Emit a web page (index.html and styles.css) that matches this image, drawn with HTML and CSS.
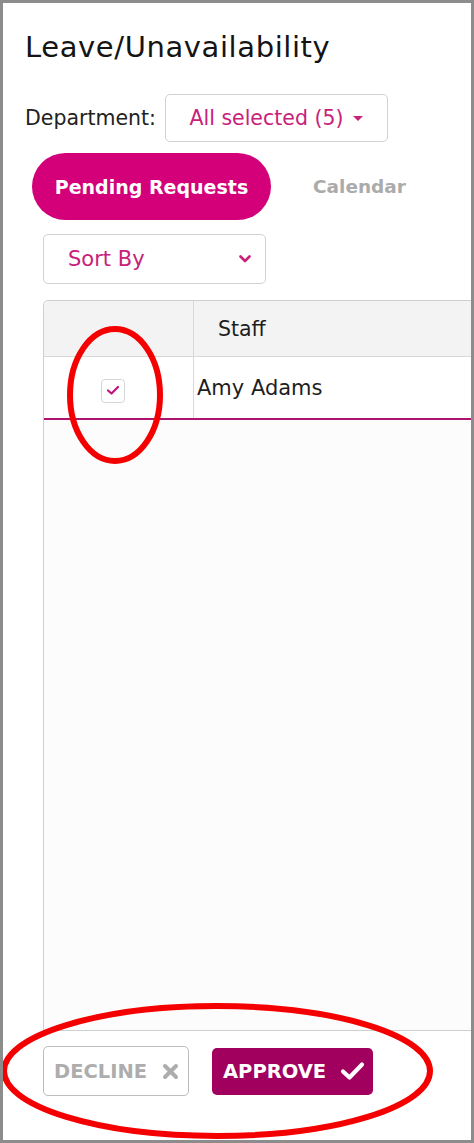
FILE: index.html
```html
<!DOCTYPE html>
<html>
<head>
<meta charset="utf-8">
<link rel="stylesheet" href="styles.css">
</head>
<body>
<div class="frame">
  <h1 class="title">Leave/Unavailability</h1>
  <div class="dept-row">
    <span class="dept-label">Department:</span>
    <div class="dept-select">All selected (5) <span class="caret"></span></div>
  </div>
  <div class="tabs">
    <div class="tab active">Pending Requests</div>
    <div class="tab">Calendar</div>
  </div>
  <div class="sort-select">
    <span>Sort By</span>
    <svg class="chev" width="12" height="8" viewBox="0 0 12 8"><path d="M1.5 1.5 L6 6 L10.5 1.5" fill="none" stroke="#c8217a" stroke-width="2.6" stroke-linecap="round" stroke-linejoin="round"/></svg>
  </div>
  <div class="table">
    <div class="thead">
      <div class="cell-check"></div>
      <div class="cell-name head">Staff</div>
    </div>
    <div class="row">
      <div class="cell-check">
        <div class="checkbox">
          <svg width="14" height="11" viewBox="0 0 14 11"><path d="M2 5.5 L5.5 8.5 L12 2" fill="none" stroke="#c0127a" stroke-width="2.2" stroke-linecap="round" stroke-linejoin="round"/></svg>
        </div>
      </div>
      <div class="cell-name">Amy Adams</div>
    </div>
    <div class="tbody-empty"></div>
  </div>
  <div class="actions">
    <button class="btn decline">DECLINE
      <svg width="17" height="17" viewBox="0 0 17 17"><path d="M3 3 L14 14 M14 3 L3 14" stroke="#adadad" stroke-width="4" stroke-linecap="round"/></svg>
    </button>
    <button class="btn approve">APPROVE
      <svg width="25" height="20" viewBox="0 0 25 20"><path d="M3 10.5 L9.5 16.5 L22 3.5" fill="none" stroke="#fff" stroke-width="4.2" stroke-linecap="round" stroke-linejoin="round"/></svg>
    </button>
  </div>
  <svg class="annotations" width="474" height="1143" viewBox="0 0 474 1143">
    <ellipse cx="115" cy="395" rx="45" ry="66" fill="none" stroke="#f50000" stroke-width="6"/>
    <ellipse cx="217" cy="1071" rx="213" ry="65" fill="none" stroke="#f50000" stroke-width="6"/>
  </svg>
</div>
</body>
</html>
```
FILE: styles.css
```css
* { box-sizing: border-box; }
html, body { margin: 0; padding: 0; background: #fff; }
body { font-family: "DejaVu Sans", "Open Sans", sans-serif; color: #1b1b1b; }

.frame {
  position: relative;
  width: 474px;
  height: 1143px;
  border: 3px solid #8c8c8c;
  overflow: hidden;
  display: flex;
  flex-direction: column;
  padding-left: 22px;
}

.title {
  margin: 26px 0 0 0;
  font-size: 29px;
  font-weight: 500;
  line-height: 36px;
  letter-spacing: 0.6px;
  color: #141414;
}

.dept-row {
  display: flex;
  align-items: center;
  gap: 9px;
  margin-top: 29px;
  height: 48px;
}
.dept-label { font-size: 20.5px; color: #222; }
.dept-select {
  height: 48px;
  width: 223px;
  border: 1px solid #d2d2d2;
  border-radius: 5px;
  display: flex;
  align-items: center;
  justify-content: center;
  gap: 10px;
  font-size: 20.5px;
  color: #c8217a;
}
.caret {
  width: 0; height: 0;
  border-left: 5px solid transparent;
  border-right: 5px solid transparent;
  border-top: 5px solid #c8217a;
}

.tabs {
  display: flex;
  align-items: center;
  margin-top: 11px;
  margin-left: 7px;
  gap: 42px;
}
.tab {
  font-size: 18.5px;
  font-weight: 700;
  color: #ababab;
}
.tab.active {
  height: 67px;
  width: 239px;
  border-radius: 34px;
  background: #d3007a;
  color: #fff;
  font-size: 19px;
  display: flex;
  align-items: center;
  justify-content: center;
}

.sort-select {
  margin-top: 14px;
  margin-left: 18px;
  width: 223px;
  height: 50px;
  border: 1px solid #d2d2d2;
  border-radius: 5px;
  display: flex;
  align-items: center;
  justify-content: space-between;
  padding: 0 14px 0 24px;
  font-size: 21px;
  color: #c8217a;
}

.table {
  margin-top: 16px;
  margin-left: 18px;
  width: 460px;
  height: 731px;
  border: 1px solid #cfcfcf;
  border-radius: 5px 0 0 0;
  display: flex;
  flex-direction: column;
  background: #fcfcfc;
}
.thead {
  display: flex;
  height: 56px;
  background: #f3f3f3;
  border-bottom: 1px solid #d8d8d8;
  border-radius: 5px 0 0 0;
}
.row {
  display: flex;
  height: 63px;
  background: #fff;
  border-bottom: 2px solid #b0136e;
}
.cell-check {
  width: 150px;
  flex: none;
  border-right: 1px solid #d8d8d8;
  display: flex;
  align-items: center;
  justify-content: center;
}
.cell-name {
  display: flex;
  align-items: center;
  padding-left: 3px;
  font-size: 21px;
  color: #1e1e1e;
}
.cell-name.head { padding-left: 24px; font-size: 20.5px; }
.checkbox {
  width: 24px;
  height: 24px;
  border: 1px solid #d6d6d6;
  border-radius: 4px;
  background: #fff;
  display: flex;
  align-items: center;
  justify-content: center;
  margin-top: 6px;
  margin-right: 12px;
}
.tbody-empty { flex: 1; }

.actions {
  display: flex;
  align-items: center;
  gap: 23px;
  margin-top: 15px;
  margin-left: 18px;
}
.btn {
  font-family: inherit;
  font-weight: 700;
  font-size: 19.5px;
  border-radius: 5px;
  display: flex;
  align-items: center;
  gap: 14px;
  padding: 0;
}
.btn.decline {
  width: 146px;
  height: 50px;
  background: #fff;
  border: 1px solid #bdbdbd;
  color: #adadad;
  padding-left: 10px;
  gap: 15px;
}
.btn.approve {
  width: 161px;
  height: 47px;
  background: #a2005f;
  border: none;
  color: #fff;
  padding-left: 11px;
}

.annotations {
  position: absolute;
  left: -3px;
  top: -3px;
  pointer-events: none;
}
```
